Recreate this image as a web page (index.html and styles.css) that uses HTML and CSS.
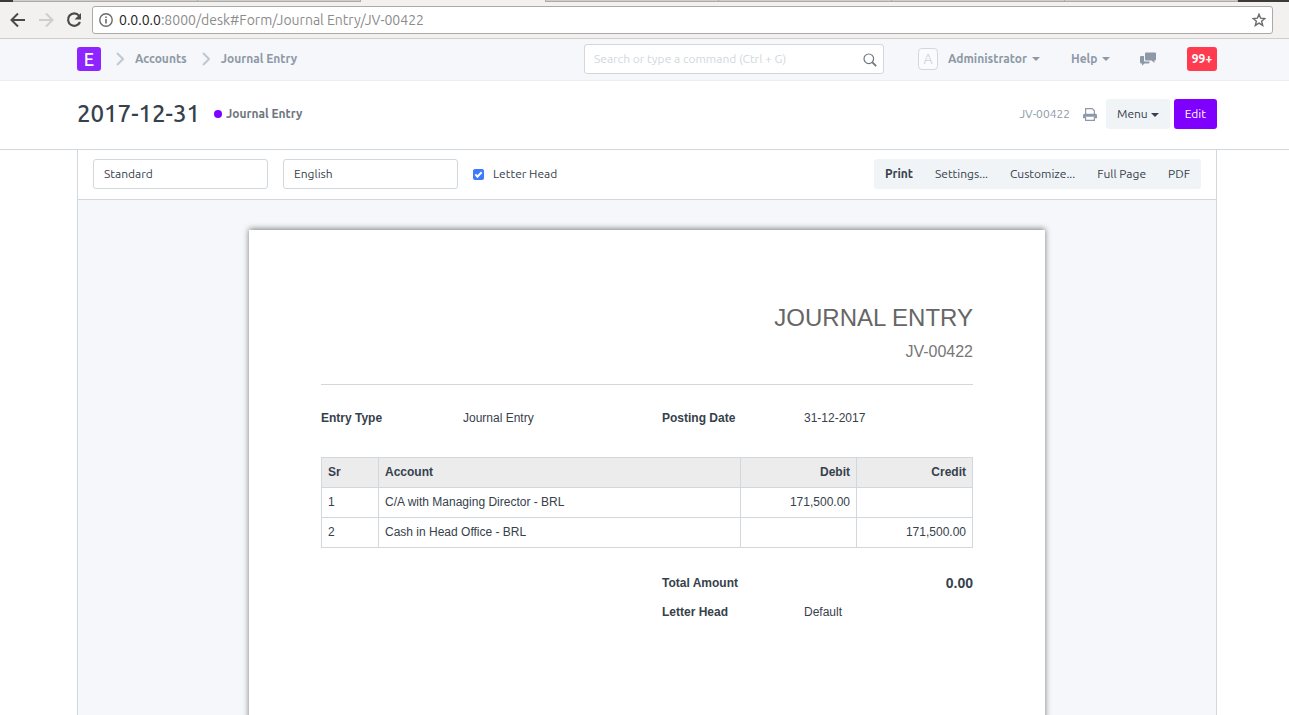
FILE: index.html
```html
<!DOCTYPE html>
<html lang="en">
<head>
    <meta charset="UTF-8">
    <meta name="viewport" content="width=device-width, initial-scale=1.0">
    <title>Journal Entry - JV-00422</title>
    <link rel="stylesheet" href="styles.css">
</head>
<body>
    <!-- browser bar -->
    <div class="browser">
        <div class="tab-strip">
            <span class="tab-edge"></span>
            <span class="tab tab-wide"></span>
            <span class="tab tab-short"></span>
            <span class="tab tab-wide active"></span>
            <span class="tab"></span>
            <span class="tab"></span>
            <span class="tab"></span>
            <span class="tab"></span>
            <span class="tab-edge tab-edge-right"></span>
        </div>
        <div class="address-row">
            <button class="browser-btn" aria-label="Back">
                <svg width="20" height="20" viewBox="0 0 20 20" fill="none" stroke="#4a4a4a" stroke-width="2"><path d="M17 10H4M10 3.5 3.5 10 10 16.5"/></svg>
            </button>
            <button class="browser-btn" aria-label="Forward">
                <svg width="20" height="20" viewBox="0 0 20 20" fill="none" stroke="#cfcecc" stroke-width="2"><path d="M3 10h13M10 3.5 16.5 10 10 16.5"/></svg>
            </button>
            <button class="browser-btn" aria-label="Reload">
                <svg width="20" height="20" viewBox="0 0 20 20"><path d="M15 5.6A6.2 6.2 0 1 0 16 12" fill="none" stroke="#4a4a4a" stroke-width="2.2"/><path d="M17 3v6.5h-6.5z" fill="#4a4a4a"/></svg>
            </button>
            <div class="address">
                <svg width="14" height="14" viewBox="0 0 14 14"><circle cx="7" cy="7" r="6.2" fill="none" stroke="#6b6b6b" stroke-width="1.4"/><path d="M6.2 6h1.6v4.6H6.2zM6.2 3.4h1.6V5H6.2z" fill="#6b6b6b"/></svg>
                <span class="url"><span class="host">0.0.0.0</span>:8000/desk#Form/Journal Entry/JV-00422</span>
                <svg width="14" height="14" viewBox="0 0 14 14" fill="none" stroke="#6b6b6b" stroke-width="1.4"><path d="M7 1.2 8.6 5.2 12.9 5.5 9.6 8.2 10.7 12.4 7 10.1 3.3 12.4 4.4 8.2 1.1 5.5 5.4 5.2z"/></svg>
            </div>
        </div>
    </div>

    <header class="navbar">
        <div class="container navbar-inner">
            <nav class="breadcrumbs">
                <a href="#" class="logo">E</a>
                <svg class="chevron" width="8" height="14" viewBox="0 0 8 14"><path d="M1 1l6 6-6 6"/></svg>
                <a href="#">Accounts</a>
                <svg class="chevron" width="8" height="14" viewBox="0 0 8 14"><path d="M1 1l6 6-6 6"/></svg>
                <a href="#">Journal Entry</a>
            </nav>
            <div class="search">
                <input type="text" placeholder="Search or type a command (Ctrl + G)" aria-label="Search">
                <svg class="search-icon" width="14" height="14" viewBox="0 0 14 14" fill="none" stroke="#6c7680"><circle cx="5.8" cy="5.8" r="4.8" stroke-width="1.2"/><path d="M9.4 9.4l3.8 3.8" stroke-width="1.8"/></svg>
            </div>
            <div class="nav-right">
                <a href="#" class="user"><span class="avatar">A</span>Administrator<span class="caret"></span></a>
                <a href="#" class="help">Help<span class="caret"></span></a>
                <a href="#" class="chat" aria-label="Chat">
                    <svg width="16" height="14" viewBox="0 0 16 14" fill="#8d99a6"><path d="M6 .5h9q1 0 1 1v6q0 1-1 1h-.6v2.6L11.6 8.500H6q-1 0-1-1v-6q0-1 1-1z"/><path d="M1 4h3v4.500q0 1 1 1h4.500v1q0 1-1 1H4.500L2 13.800V11.500H1q-1 0-1-1V5q0-1 1-1z"/></svg>
                </a>
                <a href="#" class="badge">99+</a>
            </div>
        </div>
    </header>

    <div class="page-head">
        <div class="container page-head-inner">
            <h1>2017-12-31</h1>
            <span class="indicator">Journal Entry</span>
            <div class="page-actions">
                <span class="doc-name">JV-00422</span>
                <button class="icon-btn" aria-label="Print">
                    <svg width="14" height="13" viewBox="0 0 14 13"><path d="M2.600 6V.6h6.600l2.200 2.200V6M2.600 9v3.400h8.800V9" fill="none" stroke="#8d99a6" stroke-width="1.200"/><path d="M1.500 5.800h11Q14 5.800 14 7.300v3h-2V8.800H2v1.500H0v-3q0-1.500 1.500-1.500z" fill="#8d99a6"/></svg>
                </button>
                <button class="btn btn-default">Menu<span class="caret"></span></button>
                <button class="btn btn-primary">Edit</button>
            </div>
        </div>
    </div>

    <main class="container layout">
        <div class="print-toolbar">
            <select aria-label="Print format"><option>Standard</option></select>
            <select aria-label="Language"><option>English</option></select>
            <label class="checkbox"><input type="checkbox" checked>Letter Head</label>
            <div class="btn-group">
                <button class="btn"><strong>Print</strong></button>
                <button class="btn">Settings...</button>
                <button class="btn">Customize...</button>
                <button class="btn">Full Page</button>
                <button class="btn">PDF</button>
            </div>
        </div>
        <div class="preview">
            <article class="paper">
                <div class="print-heading">
                    <h2>JOURNAL ENTRY</h2>
                    <p>JV-00422</p>
                </div>
                <div class="fields">
                    <dl><dt>Entry Type</dt><dd>Journal Entry</dd></dl>
                    <dl><dt>Posting Date</dt><dd>31-12-2017</dd></dl>
                </div>
                <table>
                    <thead>
                        <tr><th class="sr">Sr</th><th>Account</th><th class="amount">Debit</th><th class="amount">Credit</th></tr>
                    </thead>
                    <tbody>
                        <tr><td>1</td><td>C/A with Managing Director - BRL</td><td class="amount">171,500.00</td><td></td></tr>
                        <tr><td>2</td><td>Cash in Head Office - BRL</td><td></td><td class="amount">171,500.00</td></tr>
                    </tbody>
                </table>
                <div class="fields totals">
                    <dl>
                        <dt>Total Amount</dt><dd class="total">0.00</dd>
                        <dt>Letter Head</dt><dd>Default</dd>
                    </dl>
                </div>
            </article>
        </div>
    </main>
</body>
</html>
```

FILE: styles.css
```css
* {
    box-sizing: border-box;
}

body {
    margin: 0;
    min-height: 100vh;
    display: flex;
    flex-direction: column;
    font-family: Ubuntu, "Noto Sans", "Open Sans", sans-serif;
    font-size: 12px;
    line-height: 18px;
    color: #36414c;
    background: #fff;
}

a {
    color: inherit;
    text-decoration: none;
}

button, input, select {
    font: inherit;
    color: inherit;
}

button {
    border: none;
    background: none;
    padding: 0;
    cursor: pointer;
}

svg {
    display: block;
    flex: none;
}

.container {
    margin: 0 72px 0 77px;
}

/* browser */
.browser {
    background: #f2f1f0;
    border-bottom: 1px solid #cfcdcb;
}

.tab-strip {
    display: flex;
    height: 2px;
}

.tab {
    flex: 1;
    background: #d0cecb;
    border-bottom: 1px solid #adaba8;
    border-right: 1px solid #adaba8;
}

.tab-wide {
    flex: 0 1 185px;
}

.tab-short {
    flex: 0 1 163px;
}

.tab.active {
    background: none;
    border-bottom: none;
}

.tab-edge {
    width: 13px;
    background: #3c3b37;
}

.tab-edge-right {
    width: 51px;
}

.address-row {
    display: flex;
    align-items: center;
    gap: 8px;
    padding: 4px 16px 4px 8px;
}

.address {
    flex: 1;
    display: flex;
    align-items: center;
    gap: 6px;
    height: 28px;
    padding: 0 6px;
    background: #fff;
    border: 1px solid #aaa;
    border-radius: 3px;
}

.url {
    flex: 1;
    font-size: 14px;
    color: #8c8c8c;
}

.host {
    color: #222;
}

/* navbar */
.navbar {
    background: #f5f7fa;
    border-bottom: 1px solid #ebeff2;
    color: #8d99a6;
    font-weight: bold;
}

.navbar-inner {
    display: flex;
    align-items: center;
    height: 41px;
    padding-bottom: 2px;
}

.breadcrumbs {
    display: flex;
    align-items: center;
    flex: 1;
}

.logo {
    width: 24px;
    height: 24px;
    border-radius: 3px;
    background: #8e24ff;
    color: #fff;
    font-size: 18px;
    font-weight: 500;
    line-height: 24px;
    text-align: center;
}

.chevron {
    margin: 0 11px 0 15px;
    fill: none;
    stroke: #c0c8d2;
    stroke-width: 2;
}

.search {
    position: relative;
    width: 300px;
}

.search input {
    display: block;
    width: 100%;
    height: 30px;
    padding: 0 9px;
    border: 1px solid #d1d8dd;
    border-radius: 3px;
    background: #fff;
    font-weight: normal;
}

.search input::placeholder {
    color: #d1d8dd;
    opacity: 1;
}

.search-icon {
    position: absolute;
    right: 7px;
    top: 9px;
}

.nav-right {
    display: flex;
    align-items: center;
    width: 333px;
    padding-left: 34px;
}

.user, .help {
    display: flex;
    align-items: center;
}

.user {
    width: 153px;
}

.help {
    width: 69px;
}

.avatar {
    width: 20px;
    height: 22px;
    margin-right: 10px;
    border: 1px solid #d1d8dd;
    border-radius: 4px;
    background: #fafbfc;
    color: #d1d8dd;
    font-size: 14px;
    font-weight: normal;
    line-height: 20px;
    text-align: center;
}

.caret {
    display: inline-block;
    margin-left: 5px;
    border-top: 4px solid;
    border-left: 4px solid transparent;
    border-right: 4px solid transparent;
}

.badge {
    width: 30px;
    margin-left: auto;
    border-radius: 3px;
    background: #ff3b50;
    color: #fff;
    line-height: 24px;
    text-align: center;
}

/* page head */
.page-head {
    border-bottom: 1px solid #d1d8dd;
}

.page-head-inner {
    display: flex;
    align-items: center;
    height: 68px;
    padding-bottom: 2px;
}

h1 {
    margin: 0 14px 0 0;
    font-size: 24px;
    font-weight: 500;
    line-height: 30px;
}

.indicator {
    display: flex;
    align-items: center;
    color: #6c7680;
    font-weight: bold;
}

.indicator::before {
    content: "";
    width: 8px;
    height: 8px;
    margin-right: 4px;
    border-radius: 50%;
    background: #7f00ff;
}

.page-actions {
    display: flex;
    align-items: center;
    margin-left: auto;
}

.doc-name {
    color: #8d99a6;
}

.icon-btn {
    margin: 0 9px 0 13px;
}

.btn {
    height: 30px;
    padding: 0 11px;
    border-radius: 3px;
}

.btn-default {
    margin-right: 4px;
    background: #f0f4f7;
}

.btn .caret {
    margin-left: 3px;
    vertical-align: middle;
}

.btn-primary {
    background: #7f00ff;
    color: #fff;
}

/* print preview */
.layout {
    flex: 1;
    display: flex;
    flex-direction: column;
    border-left: 1px solid #d1d8dd;
    border-right: 1px solid #d1d8dd;
}

.print-toolbar {
    display: flex;
    align-items: center;
    gap: 15px;
    padding: 9px 15px 10px;
    border-bottom: 1px solid #d1d8dd;
}

select {
    appearance: none;
    width: 175px;
    height: 30px;
    padding: 0 10px;
    border: 1px solid #d1d8dd;
    border-radius: 3px;
    background: #fff;
}

.checkbox {
    display: flex;
    align-items: center;
}

.checkbox input {
    appearance: none;
    width: 11px;
    height: 11px;
    margin: 0 9px 0 0;
    border-radius: 2px;
    background: #3b7cff;
}

.checkbox input:checked::before {
    content: "";
    display: block;
    box-sizing: content-box;
    width: 5px;
    height: 2px;
    margin: 3px auto 0;
    border-left: 2px solid #fff;
    border-bottom: 2px solid #fff;
    transform: rotate(-45deg);
}

.btn-group {
    display: flex;
    margin-left: auto;
    border-radius: 3px;
    background: #f0f4f7;
}

.preview {
    flex: 1;
    display: flex;
    justify-content: center;
    padding-top: 30px;
    background: #f5f7fa;
}

.paper {
    width: 796px;
    max-width: 100%;
    padding: 72px;
    background: #fff;
    box-shadow: 0 -1px 6px rgba(0, 0, 0, 0.5);
    clip-path: inset(-8px -8px 0);
    font-family: "Liberation Sans", Arial, sans-serif;
}

.print-heading {
    padding-bottom: 20px;
    border-bottom: 1px solid #d1d8dd;
    text-align: right;
}

h2 {
    margin: 0;
    color: #666;
    font-size: 24px;
    font-weight: normal;
    line-height: 32px;
}

.print-heading p {
    margin: 6px 0 0;
    color: #777;
    font-size: 16px;
    line-height: 24px;
}

.fields {
    display: grid;
    grid-template-columns: 1fr 1fr;
    column-gap: 30px;
    padding: 24px 0 30px;
}

dl {
    display: grid;
    grid-template-columns: 142px 1fr;
    row-gap: 11px;
    margin: 0;
}

dt {
    font-weight: bold;
}

dd {
    margin: 0;
}

table {
    width: 100%;
    border-collapse: collapse;
    table-layout: fixed;
}

th, td {
    height: 30px;
    padding: 0 6px 2px;
    border: 1px solid #d1d8dd;
    text-align: left;
}

th {
    background: #ececec;
}

.sr {
    width: 57px;
}

th.amount {
    width: 116px;
}

.amount {
    text-align: right;
}

.totals {
    padding-top: 26px;
}

.totals dl {
    grid-column: 2;
}

.total {
    font-size: 14px;
    font-weight: bold;
    text-align: right;
}
```
